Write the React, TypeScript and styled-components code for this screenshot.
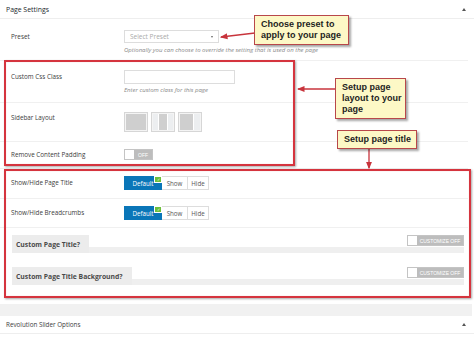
import React from "react";
import styled, { createGlobalStyle } from "styled-components";

const GlobalStyle = createGlobalStyle`
  html, body {
    margin: 0;
    padding: 0;
    background: #ffffff;
  }
  body {
    font-family: "Open Sans", "Noto Sans", sans-serif;
    color: #444;
  }
`;

const Page = styled.div`
  position: relative;
  width: 474px;
  height: 339px;
  overflow: hidden;
  background: #fff;
`;

const Header = styled.div`
  height: 18px;
  display: flex;
  align-items: center;
  justify-content: space-between;
  padding: 0 8px 0 6px;
  border-bottom: 1px solid #eee;
  font-size: 6.9px;
  color: #23282d;
`;

const Caret = styled.span`
  width: 0;
  height: 0;
  border-left: 2.5px solid transparent;
  border-right: 2.5px solid transparent;
  border-bottom: 3px solid #555;
`;

const Row = styled.div<{ $h: number; $pt: number }>`
  height: ${(p) => p.$h}px;
  box-sizing: border-box;
  padding-top: ${(p) => p.$pt}px;
  display: flex;
  align-items: flex-start;
  margin-right: 6px;
  border-bottom: 1px solid #f0f0f0;
`;

const Label = styled.div<{ $lh: number }>`
  width: 113px;
  padding-left: 11px;
  font-size: 6.3px;
  line-height: ${(p) => p.$lh}px;
  color: #3c3c3c;
`;

const Field = styled.div`
  display: flex;
  flex-direction: column;
`;

const Select = styled.div`
  width: 95px;
  height: 13px;
  box-sizing: border-box;
  border: 1px solid #ddd;
  display: flex;
  align-items: center;
  justify-content: space-between;
  padding: 0 5px;
  font-size: 6.5px;
  color: #aaa;
`;

const SmallCaret = styled.span`
  width: 0;
  height: 0;
  border-left: 1.5px solid transparent;
  border-right: 1.5px solid transparent;
  border-top: 2px solid #666;
`;

const Help = styled.div<{ $mt: number }>`
  margin-top: ${(p) => p.$mt}px;
  font-size: 6px;
  line-height: 8px;
  font-style: italic;
  color: #888;
  white-space: nowrap;
`;

const Input = styled.div`
  width: 111px;
  height: 14px;
  box-sizing: border-box;
  border: 1px solid #ddd;
  background: #fff;
`;

const Layouts = styled.div`
  display: flex;
  gap: 3px;
`;

const LayoutBox = styled.div`
  width: 24px;
  height: 20px;
  box-sizing: border-box;
  border: 1px solid #d6d6d6;
  padding: 1px;
  display: flex;
  background: #f4f4f4;
`;

const LayoutPart = styled.div<{ $w?: number; $dark?: boolean }>`
  ${(p) => (p.$w ? `width: ${p.$w}px;` : "flex: 1;")}
  background: ${(p) => (p.$dark ? "#cfcfcf" : "#eceef0")};
  border-right: 1px solid #fff;
  &:last-child {
    border-right: none;
  }
`;

const Toggle = styled.div<{ $w: number }>`
  width: ${(p) => p.$w}px;
  height: 11px;
  box-sizing: border-box;
  display: flex;
  border: 1px solid #c4c4c4;
  background: #bdbdbd;
`;

const Knob = styled.div`
  width: 9px;
  background: #fff;
`;

const ToggleText = styled.div`
  flex: 1;
  display: flex;
  align-items: center;
  justify-content: center;
  font-size: 5px;
  color: #fff;
  white-space: nowrap;
  font-family: "Liberation Sans", sans-serif;
`;

const BtnGroup = styled.div`
  display: flex;
  height: 14px;
`;

const Btn = styled.div<{ $active?: boolean; $w: number }>`
  position: relative;
  width: ${(p) => p.$w}px;
  box-sizing: border-box;
  display: flex;
  align-items: center;
  justify-content: center;
  font-size: 6.2px;
  background: ${(p) => (p.$active ? "#0a76b8" : "#fff")};
  color: ${(p) => (p.$active ? "#fff" : "#555")};
  border: 1px solid ${(p) => (p.$active ? "#0a76b8" : "#ddd")};
  border-left-width: ${(p) => (p.$active ? 1 : 0)}px;
`;

const Check = styled.span`
  position: absolute;
  top: -1px;
  right: -1px;
  width: 6px;
  height: 5px;
  background: #6cbf3c;
  border: 0.5px solid #fff;
  display: flex;
  align-items: center;
  justify-content: center;
  font-size: 4px;
  color: #fff;
  line-height: 1;
`;

const Sections = styled.div`
  padding: 7px 10px 19px 12px;
  display: flex;
  flex-direction: column;
  gap: 14px;
`;

const Section = styled.div`
  display: flex;
  align-items: flex-end;
  height: 18px;
`;

const Tab = styled.div`
  height: 18px;
  box-sizing: border-box;
  padding: 0 9px 0 4px;
  display: flex;
  align-items: center;
  background: #ececec;
  font-size: 6.8px;
  font-weight: 700;
  color: #4a4a4a;
`;

const Filler = styled.div`
  flex: 1;
  display: flex;
  flex-direction: column;
  align-items: flex-end;
  gap: 1px;
`;

const Strip = styled.div`
  align-self: stretch;
  height: 6px;
  background: #efefef;
`;

const Band = styled.div`
  height: 12px;
  background: #f1f1f1;
  margin-right: 2px;
`;

const SubHeader = styled(Header)`
  height: 17px;
  font-size: 6.3px;
  color: #3c3c3c;
`;

const RedBox = styled.div<{ $x: number; $y: number; $w: number; $h: number }>`
  position: absolute;
  left: ${(p) => p.$x}px;
  top: ${(p) => p.$y}px;
  width: ${(p) => p.$w}px;
  height: ${(p) => p.$h}px;
  box-sizing: border-box;
  border: 2px solid #d5343e;
  box-shadow: 1px 1px 2px rgba(0, 0, 0, 0.35), inset 0 0 1px rgba(213, 52, 62, 0.4);
  pointer-events: none;
`;

const Callout = styled.div<{ $x: number; $y: number; $w: number }>`
  position: absolute;
  left: ${(p) => p.$x}px;
  top: ${(p) => p.$y}px;
  width: ${(p) => p.$w}px;
  box-sizing: border-box;
  padding: 3px 0 3px 6px;
  background: #fdf8c6;
  border: 1px solid #b8474a;
  box-shadow: 2px 2px 2px rgba(0, 0, 0, 0.35);
  font-family: "Liberation Sans", Arial, sans-serif;
  font-weight: 700;
  font-size: 9px;
  line-height: 11px;
  color: #1e1e1e;
  white-space: nowrap;
`;

const Arrows = styled.svg`
  position: absolute;
  left: 0;
  top: 0;
  pointer-events: none;
`;

export default function App() {
  return (
    <>
      <GlobalStyle />
      <Page>
        <Header>
          <span>Page Settings</span>
          <Caret />
        </Header>

        <Row $h={42} $pt={11}>
          <Label $lh={13}>Preset</Label>
          <Field>
            <Select>
              <span>Select Preset</span>
              <SmallCaret />
            </Select>
            <Help $mt={3}>Optionally you can choose to override the setting that is used on the page</Help>
          </Field>
        </Row>

        <Row $h={42} $pt={9}>
          <Label $lh={14}>Custom Css Class</Label>
          <Field>
            <Input />
            <Help $mt={2}>Enter custom class for this page</Help>
          </Field>
        </Row>

        <Row $h={39} $pt={9}>
          <Label $lh={12}>Sidebar Layout</Label>
          <Layouts>
            <LayoutBox>
              <LayoutPart $dark />
            </LayoutBox>
            <LayoutBox>
              <LayoutPart $w={5} />
              <LayoutPart $dark />
              <LayoutPart $w={5} />
            </LayoutBox>
            <LayoutBox>
              <LayoutPart $dark />
              <LayoutPart $w={6} />
            </LayoutBox>
          </Layouts>
        </Row>

        <Row $h={27} $pt={7}>
          <Label $lh={11}>Remove Content Padding</Label>
          <Toggle $w={29}>
            <Knob />
            <ToggleText>OFF</ToggleText>
          </Toggle>
        </Row>

        <Row $h={30} $pt={7}>
          <Label $lh={14}>Show/Hide Page Title</Label>
          <BtnGroup>
            <Btn $active $w={38}>
              Default
              <Check>✓</Check>
            </Btn>
            <Btn $w={26}>Show</Btn>
            <Btn $w={21}>Hide</Btn>
          </BtnGroup>
        </Row>

        <Row $h={29} $pt={7}>
          <Label $lh={14}>Show/Hide Breadcrumbs</Label>
          <BtnGroup>
            <Btn $active $w={38}>
              Default
              <Check>✓</Check>
            </Btn>
            <Btn $w={26}>Show</Btn>
            <Btn $w={21}>Hide</Btn>
          </BtnGroup>
        </Row>

        <Sections>
          <Section>
            <Tab>Custom Page Title?</Tab>
            <Filler>
              <Toggle $w={57}>
                <Knob />
                <ToggleText>CUSTOMIZE OFF</ToggleText>
              </Toggle>
              <Strip />
            </Filler>
          </Section>
          <Section>
            <Tab>Custom Page Title Background?</Tab>
            <Filler>
              <Toggle $w={57}>
                <Knob />
                <ToggleText>CUSTOMIZE OFF</ToggleText>
              </Toggle>
              <Strip />
            </Filler>
          </Section>
        </Sections>

        <Band />
        <SubHeader>
          <span>Revolution Slider Options</span>
          <Caret />
        </SubHeader>

        <RedBox $x={4} $y={60} $w={291} $h={106} />
        <RedBox $x={4} $y={169} $w={467} $h={129} />

        <Arrows width="474" height="339" viewBox="0 0 474 339">
          <defs>
            <marker id="head" markerWidth="6" markerHeight="6" refX="5" refY="3" orient="auto">
              <path d="M0,0.6 L6,3 L0,5.4 Z" fill="#c8343c" />
            </marker>
          </defs>
          <g stroke="#c8343c" strokeWidth="1.3" fill="none" markerEnd="url(#head)">
            <line x1="255" y1="33" x2="221" y2="37" />
            <line x1="335" y1="89" x2="298" y2="89" />
            <line x1="369" y1="147" x2="369" y2="168" />
          </g>
        </Arrows>

        <Callout $x={254} $y={15} $w={95}>
          Choose preset to
          <br />
          apply to your page
        </Callout>
        <Callout $x={335} $y={78} $w={71}>
          Setup page
          <br />
          layout to your
          <br />
          page
        </Callout>
        <Callout $x={337} $y={130} $w={80}>
          Setup page title
        </Callout>
      </Page>
    </>
  );
}
